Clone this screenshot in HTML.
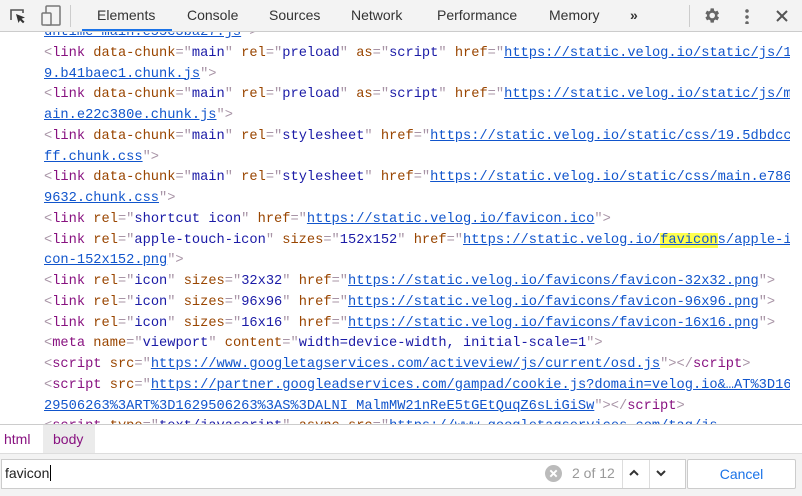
<!DOCTYPE html>
<html><head><meta charset="utf-8"><style>
*{margin:0;padding:0;box-sizing:border-box}
body{width:802px;height:496px;overflow:hidden;background:#fff;position:relative;font-family:"Liberation Sans",sans-serif}
#tb{position:absolute;left:0;top:0;width:802px;height:32px;background:#f3f3f3;border-bottom:1px solid #ccc;z-index:2}
.tab{position:absolute;top:7px;font-size:14px;color:#333}
#code{position:absolute;left:0;top:32px;width:790px;height:392px;overflow:hidden}
#lines{position:absolute;left:44px;top:-9px;font-family:"Liberation Mono",monospace;font-size:13.7px;color:#222}
#lines div{height:20.75px;line-height:20.75px;white-space:pre}
.t{color:#881280}.a{color:#994500}.v{color:#1a1aa6}.p{color:#a894a6}
.u{color:#1155cc;text-decoration:underline}
.hl{background:#ffff4d}
#sb{position:absolute;left:791px;top:60px;width:7px;height:40px;background:#c1c1c1;border-radius:3px}
#bc{position:absolute;left:0;top:424px;width:802px;height:30px;background:#fff;border-top:1px solid #ccc;border-bottom:1px solid #ddd;font-size:14px}
#sr{position:absolute;left:0;top:454px;width:802px;height:42px;background:#f3f3f3}
</style></head><body>
<div id="tb">
<svg style="position:absolute;left:8px;top:6px" width="20" height="20" viewBox="0 0 20 20"><path d="M3 14V4h12v3" fill="none" stroke="#555" stroke-width="1.6"/><path d="M8 8l9 3.5-3.5 1.2 3 3-1.5 1.5-3-3L10.5 17z" fill="#333"/></svg>
<svg style="position:absolute;left:40px;top:5px" width="22" height="22" viewBox="0 0 22 22"><rect x="6" y="1" width="14" height="19" rx="1" fill="none" stroke="#777" stroke-width="1.5"/><rect x="2" y="8" width="9" height="12" rx="1" fill="#f3f3f3" stroke="#777" stroke-width="1.5"/></svg>
<div style="position:absolute;left:70px;top:5px;width:1px;height:22px;background:#ccc"></div>
<span class="tab" style="left:97px;color:#333">Elements</span>
<div style="position:absolute;left:82px;top:29px;width:90px;height:2px;background:#1a73e8"></div>
<span class="tab" style="left:187px">Console</span>
<span class="tab" style="left:269px">Sources</span>
<span class="tab" style="left:351px">Network</span>
<span class="tab" style="left:437px">Performance</span>
<span class="tab" style="left:549px">Memory</span>
<span class="tab" style="left:630px;font-weight:bold">»</span>
<div style="position:absolute;left:689px;top:5px;width:1px;height:22px;background:#ccc"></div>
<svg style="position:absolute;left:702px;top:6px" width="19" height="19" viewBox="0 0 24 24"><path fill="#666" d="M19.4 13a7.5 7.5 0 000-2l2.1-1.6-2-3.5-2.5 1a7 7 0 00-1.700-1L14.9 3h-4l-.4 2.9a7 7 0 00-1.7 1l-2.5-1-2 3.5L6.4 11a7.5 7.5 0 000 2l-2.1 1.6 2 3.5 2.5-1a7 7 0 001.7 1l.4 2.9h4l.4-2.9a7 7 0 001.7-1l2.5 1 2-3.5zM12.9 15.5a3.5 3.5 0 110-7 3.5 3.5 0 010 7z"/></svg>
<div style="position:absolute;left:745px;top:8px;width:4px;height:16px;background:radial-gradient(circle,#666 1.6px,transparent 2px) 0 0/4px 6px"></div>
<svg style="position:absolute;left:776px;top:10px" width="12" height="12" viewBox="0 0 12 12"><path d="M1 1l10 10M11 1L1 11" stroke="#555" stroke-width="2"/></svg>
</div>
<div id="code"><div id="lines">
<div><span class="u">untime-main.e55c3ba27.js</span><span class="p">"&gt;</span></div>
<div><span class="p">&lt;</span><span class="t">link</span> <span class="a">data-chunk</span><span class="p">="</span><span class="v">main</span><span class="p">"</span> <span class="a">rel</span><span class="p">="</span><span class="v">preload</span><span class="p">"</span> <span class="a">as</span><span class="p">="</span><span class="v">script</span><span class="p">"</span> <span class="a">href</span><span class="p">="</span><span class="u">https://static.velog.io/static/js/1</span></div>
<div><span class="u">9.b41baec1.chunk.js</span><span class="p">"&gt;</span></div>
<div><span class="p">&lt;</span><span class="t">link</span> <span class="a">data-chunk</span><span class="p">="</span><span class="v">main</span><span class="p">"</span> <span class="a">rel</span><span class="p">="</span><span class="v">preload</span><span class="p">"</span> <span class="a">as</span><span class="p">="</span><span class="v">script</span><span class="p">"</span> <span class="a">href</span><span class="p">="</span><span class="u">https://static.velog.io/static/js/m</span></div>
<div><span class="u">ain.e22c380e.chunk.js</span><span class="p">"&gt;</span></div>
<div><span class="p">&lt;</span><span class="t">link</span> <span class="a">data-chunk</span><span class="p">="</span><span class="v">main</span><span class="p">"</span> <span class="a">rel</span><span class="p">="</span><span class="v">stylesheet</span><span class="p">"</span> <span class="a">href</span><span class="p">="</span><span class="u">https://static.velog.io/static/css/19.5dbdcc</span></div>
<div><span class="u">ff.chunk.css</span><span class="p">"&gt;</span></div>
<div><span class="p">&lt;</span><span class="t">link</span> <span class="a">data-chunk</span><span class="p">="</span><span class="v">main</span><span class="p">"</span> <span class="a">rel</span><span class="p">="</span><span class="v">stylesheet</span><span class="p">"</span> <span class="a">href</span><span class="p">="</span><span class="u">https://static.velog.io/static/css/main.e786</span></div>
<div><span class="u">9632.chunk.css</span><span class="p">"&gt;</span></div>
<div><span class="p">&lt;</span><span class="t">link</span> <span class="a">rel</span><span class="p">="</span><span class="v">shortcut icon</span><span class="p">"</span> <span class="a">href</span><span class="p">="</span><span class="u">https://static.velog.io/favicon.ico</span><span class="p">"&gt;</span></div>
<div><span class="p">&lt;</span><span class="t">link</span> <span class="a">rel</span><span class="p">="</span><span class="v">apple-touch-icon</span><span class="p">"</span> <span class="a">sizes</span><span class="p">="</span><span class="v">152x152</span><span class="p">"</span> <span class="a">href</span><span class="p">="</span><span class="u">https://static.velog.io/<span class="hl">favicon</span>s/apple-i</span></div>
<div><span class="u">con-152x152.png</span><span class="p">"&gt;</span></div>
<div><span class="p">&lt;</span><span class="t">link</span> <span class="a">rel</span><span class="p">="</span><span class="v">icon</span><span class="p">"</span> <span class="a">sizes</span><span class="p">="</span><span class="v">32x32</span><span class="p">"</span> <span class="a">href</span><span class="p">="</span><span class="u">https://static.velog.io/favicons/favicon-32x32.png</span><span class="p">"&gt;</span></div>
<div><span class="p">&lt;</span><span class="t">link</span> <span class="a">rel</span><span class="p">="</span><span class="v">icon</span><span class="p">"</span> <span class="a">sizes</span><span class="p">="</span><span class="v">96x96</span><span class="p">"</span> <span class="a">href</span><span class="p">="</span><span class="u">https://static.velog.io/favicons/favicon-96x96.png</span><span class="p">"&gt;</span></div>
<div><span class="p">&lt;</span><span class="t">link</span> <span class="a">rel</span><span class="p">="</span><span class="v">icon</span><span class="p">"</span> <span class="a">sizes</span><span class="p">="</span><span class="v">16x16</span><span class="p">"</span> <span class="a">href</span><span class="p">="</span><span class="u">https://static.velog.io/favicons/favicon-16x16.png</span><span class="p">"&gt;</span></div>
<div><span class="p">&lt;</span><span class="t">meta</span> <span class="a">name</span><span class="p">="</span><span class="v">viewport</span><span class="p">"</span> <span class="a">content</span><span class="p">="</span><span class="v">width=device-width, initial-scale=1</span><span class="p">"&gt;</span></div>
<div><span class="p">&lt;</span><span class="t">script</span> <span class="a">src</span><span class="p">="</span><span class="u">https://www.googletagservices.com/activeview/js/current/osd.js</span><span class="p">"&gt;&lt;/</span><span class="t">script</span><span class="p">&gt;</span></div>
<div><span class="p">&lt;</span><span class="t">script</span> <span class="a">src</span><span class="p">="</span><span class="u">https://partner.googleadservices.com/gampad/cookie.js?domain=velog.io&amp;…AT%3D16</span></div>
<div><span class="u">29506263%3ART%3D1629506263%3AS%3DALNI_MalmMW21nReE5tGEtQuqZ6sLiGiSw</span><span class="p">"&gt;&lt;/</span><span class="t">script</span><span class="p">&gt;</span></div>
<div><span class="p">&lt;</span><span class="t">script</span> <span class="a">type</span><span class="p">="</span><span class="v">text/javascript</span><span class="p">"</span> <span class="a">async</span> <span class="a">src</span><span class="p">="</span><span class="u">https://www.googletagservices.com/tag/js</span></div>
</div><div id="sb"></div></div>
<div id="bc">
<span style="position:absolute;left:4px;top:6px;color:#881280">html</span>
<span style="position:absolute;left:43px;top:0;width:52px;height:28px;background:#ebebeb"></span>
<span style="position:absolute;left:53px;top:6px;color:#881280">body</span>
</div>
<div id="sr">
<div style="position:absolute;left:1px;top:5px;width:685px;height:30px;background:#fff;border:1px solid #ccc"></div>
<span style="position:absolute;left:5px;top:11px;font-size:14px;color:#222">favicon<span style="border-left:1px solid #000;margin-left:1px"></span></span>
<svg style="position:absolute;left:545px;top:11px" width="17" height="17" viewBox="0 0 16 16"><circle cx="8" cy="8" r="8" fill="#bbb"/><path d="M5 5l6 6M11 5l-6 6" stroke="#fff" stroke-width="1.8"/></svg>
<span style="position:absolute;left:572px;top:11px;font-size:14px;color:#999">2 of 12</span>
<div style="position:absolute;left:622px;top:6px;width:1px;height:28px;background:#ddd"></div>
<svg style="position:absolute;left:628px;top:14px" width="12" height="10" viewBox="0 0 12 10"><path d="M2 7l4-4 4 4" fill="none" stroke="#333" stroke-width="2"/></svg>
<div style="position:absolute;left:649px;top:6px;width:1px;height:28px;background:#ddd"></div>
<svg style="position:absolute;left:655px;top:14px" width="12" height="10" viewBox="0 0 12 10"><path d="M2 3l4 4 4-4" fill="none" stroke="#333" stroke-width="2"/></svg>
<div style="position:absolute;left:687px;top:5px;width:109px;height:30px;background:#fff;border:1px solid #ccc;border-radius:2px;color:#1a73e8;font-size:14px;text-align:center;line-height:28px">Cancel</div>
</div>
</body></html>
